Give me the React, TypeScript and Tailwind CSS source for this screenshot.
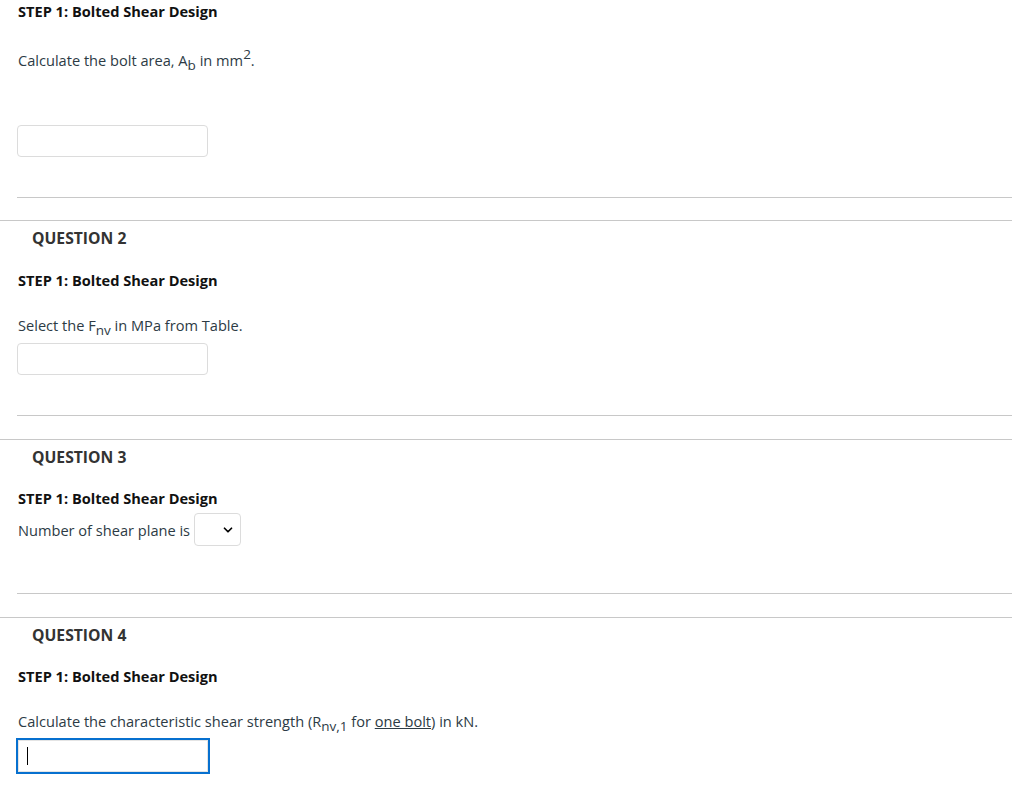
import React from 'react';
import { ChevronDown } from 'lucide-react';

const font = { fontFamily: '"Open Sans", "Liberation Sans", sans-serif' };

const Step = () => (
  <div className="text-[14.6px] leading-5 font-bold text-[#111]">STEP 1: Bolted Shear Design</div>
);

const Header: React.FC<{ n: number }> = ({ n }) => (
  <div className="pl-[32px] text-[15.7px] leading-6 font-bold text-[#333]">QUESTION {n}</div>
);

const Rules: React.FC<{ gap?: string }> = ({ gap = 'mt-[23px]' }) => (
  <>
    <div className="ml-[17px] h-px bg-[#c8c8c8]" />
    <div className={`${gap} h-px bg-[#c8c8c8]`} />
  </>
);

const TextBox: React.FC<{ focused?: boolean }> = ({ focused }) => (
  <div
    className={`h-[32px] bg-white flex items-center px-2 ${
      focused
        ? 'w-[190px] ml-px border border-[#e4e4e4] outline-2 outline-solid outline-[#0770cf] outline-offset-0'
        : 'w-[191px] rounded-[4px] border border-[#dcdcdc]'
    }`}
  >
    {focused && <span className="w-px h-[18px] bg-black" />}
  </div>
);

const sub = 'text-[13.5px] -bottom-[0.3em]';
const sup = 'text-[13.5px] -top-[0.55em]';

export default function App() {
  return (
    <div className="w-[1012px] h-[786px] overflow-hidden bg-white text-[#2d3b45]" style={font}>
      {/* question 1 (tail) */}
      <div className="pl-[17px]">
        <div className="pl-px">
          <div className="pt-px">
            <Step />
          </div>
          <p className="mt-[29px] text-[14.6px] leading-5">
            Calculate the bolt area, A<sub className={sub}>b</sub> in mm<sup className={sup}>2</sup>.
          </p>
        </div>
        <div className="mt-[55px]">
          <TextBox />
        </div>
      </div>
      <div className="mt-[40px]">
        <Rules gap="mt-[22px]" />
      </div>

      {/* question 2 */}
      <div className="mt-[5px]">
        <Header n={2} />
        <div className="pl-[18px] mt-[20px]">
          <Step />
          <p className="mt-[25px] text-[14.6px] leading-5">
            Select the F<sub className={sub}>nv</sub> in MPa from Table.
          </p>
        </div>
        <div className="pl-[17px] mt-[8px]">
          <TextBox />
        </div>
      </div>
      <div className="mt-[40px]">
        <Rules gap="mt-[23px]" />
      </div>

      {/* question 3 */}
      <div className="mt-[5px]">
        <Header n={3} />
        <div className="pl-[18px] mt-[19px]">
          <Step />
          <div className="mt-[5px] flex items-center gap-[4px] text-[14.6px] leading-5">
            <span>Number of shear plane is</span>
            <div className="w-[47px] h-[33px] rounded-[4px] border border-[#dcdcdc] flex items-center justify-end pr-[5px]">
              <ChevronDown className="w-[14px] h-[14px] text-black" strokeWidth={3} />
            </div>
          </div>
        </div>
      </div>
      <div className="mt-[47px]">
        <Rules gap="mt-[23px]" />
      </div>

      {/* question 4 */}
      <div className="mt-[5px]">
        <Header n={4} />
        <div className="pl-[18px] mt-[19px]">
          <Step />
          <p className="mt-[25px] text-[14.6px] leading-5">
            Calculate the characteristic shear strength (R<sub className={sub}>nv,1</sub> for{' '}
            <span className="underline">one bolt</span>) in kN.
          </p>
        </div>
        <div className="pl-[17px] mt-[9px]">
          <TextBox focused />
        </div>
      </div>
    </div>
  );
}
